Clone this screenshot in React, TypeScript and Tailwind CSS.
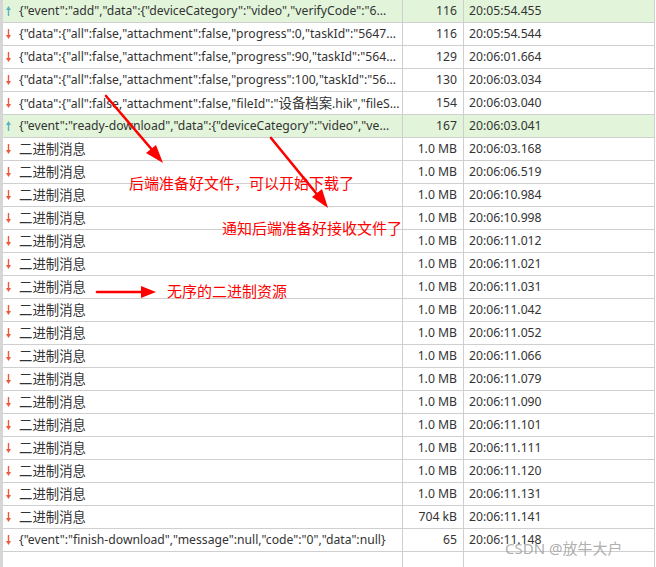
import React from 'react';

type Row = {
  dir: 'up' | 'down';
  text: React.ReactNode;
  size: string;
  time: string;
};

const cjk = (s: string) => <span className="text-[13.4px]">{s}</span>;

const binTimes: [string, string][] = [
  ['1.0 MB', '20:06:03.168'],
  ['1.0 MB', '20:06:06.519'],
  ['1.0 MB', '20:06:10.984'],
  ['1.0 MB', '20:06:10.998'],
  ['1.0 MB', '20:06:11.012'],
  ['1.0 MB', '20:06:11.021'],
  ['1.0 MB', '20:06:11.031'],
  ['1.0 MB', '20:06:11.042'],
  ['1.0 MB', '20:06:11.052'],
  ['1.0 MB', '20:06:11.066'],
  ['1.0 MB', '20:06:11.079'],
  ['1.0 MB', '20:06:11.090'],
  ['1.0 MB', '20:06:11.101'],
  ['1.0 MB', '20:06:11.111'],
  ['1.0 MB', '20:06:11.120'],
  ['1.0 MB', '20:06:11.131'],
  ['704 kB', '20:06:11.141'],
];

const rows: Row[] = [
  {
    dir: 'up',
    text: '{"event":"add","data":{"deviceCategory":"video","verifyCode":"6...',
    size: '116',
    time: '20:05:54.455',
  },
  {
    dir: 'down',
    text: '{"data":{"all":false,"attachment":false,"progress":0,"taskId":"5647...',
    size: '116',
    time: '20:05:54.544',
  },
  {
    dir: 'down',
    text: '{"data":{"all":false,"attachment":false,"progress":90,"taskId":"564...',
    size: '129',
    time: '20:06:01.664',
  },
  {
    dir: 'down',
    text: '{"data":{"all":false,"attachment":false,"progress":100,"taskId":"56...',
    size: '130',
    time: '20:06:03.034',
  },
  {
    dir: 'down',
    text: (
      <>
        {'{"data":{"all":false,"attachment":false,"fileId":"'}
        {cjk('设备档案')}
        {'.hik","fileS...'}
      </>
    ),
    size: '154',
    time: '20:06:03.040',
  },
  {
    dir: 'up',
    text: '{"event":"ready-download","data":{"deviceCategory":"video","ve...',
    size: '167',
    time: '20:06:03.041',
  },
  ...binTimes.map(([size, time]) => ({
    dir: 'down' as const,
    text: cjk('二进制消息'),
    size,
    time,
  })),
  {
    dir: 'down',
    text: '{"event":"finish-download","message":null,"code":"0","data":null}',
    size: '65',
    time: '20:06:11.148',
  },
];

function DirIcon({ dir }: { dir: 'up' | 'down' }) {
  if (dir === 'up') {
    return (
      <svg width="5" height="10" viewBox="0 0 5 10" className="shrink-0">
        <path d="M2.5 0 L5 4 L3.2 4 L3.2 10 L1.8 10 L1.8 4 L0 4 Z" fill="#5fb0bd" />
      </svg>
    );
  }
  return (
    <svg width="5" height="10" viewBox="0 0 5 10" className="shrink-0">
      <path d="M2.5 10 L5 6 L3.2 6 L3.2 0 L1.8 0 L1.8 6 L0 6 Z" fill="#ec5a3e" />
    </svg>
  );
}

function Annotations() {
  return (
    <>
      <svg
        className="absolute left-0 top-0 pointer-events-none"
        width="656"
        height="567"
        viewBox="0 0 656 567"
      >
        <g stroke="#ff0000" strokeWidth="2.6" strokeLinecap="round">
          <line x1="106" y1="96" x2="154" y2="152" />
          <line x1="271" y1="138" x2="320" y2="198" />
          <line x1="97" y1="292" x2="142" y2="292" />
        </g>
        <g fill="#ff0000">
          <polygon points="163,163 146,153 156,145" />
          <polygon points="328,208 312,197 322,189" />
          <polygon points="156,292 141,286 141,298" />
        </g>
      </svg>
      <div className="absolute left-[129px] top-[173px] text-[15px] leading-[20px] text-[#ff0000] whitespace-nowrap">
        后端准备好文件，可以开始下载了
      </div>
      <div className="absolute left-[222px] top-[218px] text-[15px] leading-[20px] text-[#ff0000] whitespace-nowrap">
        通知后端准备好接收文件了
      </div>
      <div className="absolute left-[167px] top-[281px] text-[15px] leading-[20px] text-[#ff0000] whitespace-nowrap">
        无序的二进制资源
      </div>
      <div className="absolute left-[505px] top-[538px] text-[15px] leading-[20px] text-[#9a9a9a]/80 whitespace-nowrap">
        CSDN @放牛大户
      </div>
    </>
  );
}

export default function App() {
  return (
    <div
      className="relative w-[656px] h-[567px] overflow-hidden bg-white text-[12.2px] text-[#333333]"
      style={{ fontFamily: '"Noto Sans", "Noto Sans CJK SC", sans-serif' }}
    >
      <div className="flex h-full w-[655px] border-l-[3px] border-r border-l-[#d6d6d6] border-r-[#cfcfcf]">
        <div className="flex flex-1 flex-col">
          {rows.map((r, i) => (
            <div
              key={i}
              className={`flex h-[23px] shrink-0 border-b border-[#cfcfcf] ${
                r.dir === 'up' ? 'bg-[#e2f5da]' : 'bg-white'
              }`}
            >
              <div className="flex w-[400px] items-center gap-[8px] overflow-hidden whitespace-nowrap border-r border-[#cfcfcf] pl-[3px]">
                <DirIcon dir={r.dir} />
                <span className="overflow-hidden">{r.text}</span>
              </div>
              <div className="flex w-[61px] items-center justify-end border-r border-[#cfcfcf] pr-[6px]">
                {r.size}
              </div>
              <div className="flex flex-1 items-center pl-[5px]">{r.time}</div>
            </div>
          ))}
          <div className="flex flex-1">
            <div className="w-[400px] border-r border-[#cfcfcf]" />
            <div className="w-[61px] border-r border-[#cfcfcf]" />
            <div className="flex-1" />
          </div>
        </div>
      </div>
      <Annotations />
    </div>
  );
}
